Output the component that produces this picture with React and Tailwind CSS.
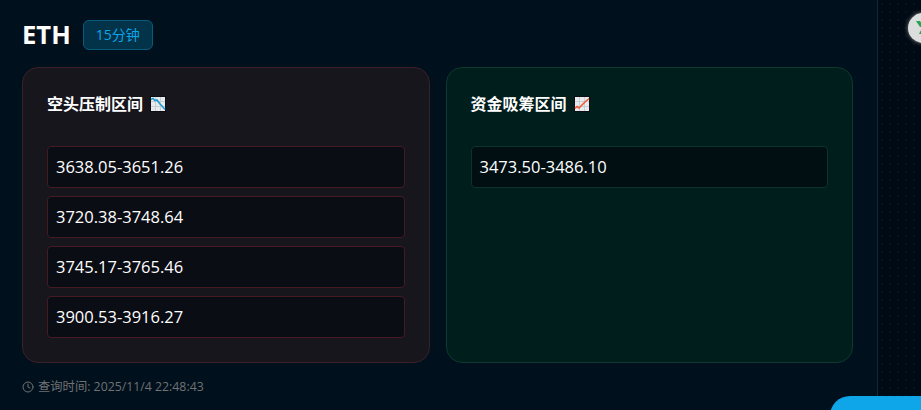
import React from 'react';
import { Clock } from 'lucide-react';

const fontStack = "font-['Open_Sans','Noto_Sans_CJK_SC',sans-serif]";

const shortZones = ['3638.05-3651.26', '3720.38-3748.64', '3745.17-3765.46', '3900.53-3916.27'];
const longZones = ['3473.50-3486.10'];

const ChartDown = () => (
  <svg width="16" height="16" viewBox="0 0 16 16" className="shrink-0">
    <rect x="0" y="0" width="16" height="16" fill="#0b0d12" />
    <rect x="1" y="1" width="14" height="14" fill="#e8ebee" />
    <path d="M5.5 1v14M10.5 1v14M1 5.5h14M1 10.5h14" stroke="#c9ced3" strokeWidth="1" />
    <path d="M1 3.5 L3 2.5 L5 4.5 L7 4 L10 8 L12 10 L15 13.5" fill="none" stroke="#1f9bd1" strokeWidth="1.6" />
  </svg>
);

const ChartUp = () => (
  <svg width="16" height="16" viewBox="0 0 16 16" className="shrink-0">
    <rect x="0" y="0" width="16" height="16" fill="#0b0d12" />
    <rect x="1" y="1" width="14" height="14" fill="#e8ebee" />
    <path d="M5.5 1v14M10.5 1v14M1 5.5h14M1 10.5h14" stroke="#c9ced3" strokeWidth="1" />
    <path d="M1 12.5 L3 10.5 L5 12 L8 9 L11 6 L15 2.5" fill="none" stroke="#ee5a3a" strokeWidth="1.6" />
  </svg>
);

const ZoneCard = ({ title, icon, zones, cardClass, rowClass }) => (
  <div className={`flex-1 h-[296px] rounded-2xl border px-6 pt-[25px] ${cardClass}`}>
    <div className="flex items-center gap-[7px] h-[22px] text-base font-bold text-white">
      <span>{title}</span>
      {icon}
    </div>
    <div className="mt-[31px] flex flex-col gap-2">
      {zones.map((zone) => (
        <div key={zone} className={`h-[42px] flex items-center rounded border px-2 text-[16.5px] text-white ${rowClass}`}>
          {zone}
        </div>
      ))}
    </div>
  </div>
);

export default function App() {
  return (
    <div className={`relative flex h-[410px] w-[921px] overflow-hidden bg-[#00101c] ${fontStack}`}>
      <main className="w-[878px] shrink-0 border-r border-[#112a38] pl-[22px] pr-[24px] pt-5">
        <div className="flex items-center gap-3 h-[30px]">
          <span className="text-[25.6px] font-bold text-white">ETH</span>
          <span className="flex h-[30px] w-[70px] items-center justify-center rounded-md border border-[#0a5a7c] bg-[#023349] text-sm text-[#0ea5e9]">
            15分钟
          </span>
        </div>
        <div className="mt-[17px] flex gap-4">
          <ZoneCard
            title="空头压制区间"
            icon={<ChartDown />}
            zones={shortZones}
            cardClass="border-[#3b1f29] bg-[#17161d]"
            rowClass="border-[#451a23] bg-[#0b0d14]"
          />
          <ZoneCard
            title="资金吸筹区间"
            icon={<ChartUp />}
            zones={longZones}
            cardClass="border-[#0c3a2c] bg-[#001e1c]"
            rowClass="border-[#0b3528] bg-[#010f13]"
          />
        </div>
        <div className="mt-[15px] flex items-center gap-1 text-[12.3px] text-[#707274]">
          <Clock size={12} />
          <span>查询时间: 2025/11/4 22:48:43</span>
        </div>
      </main>
      <aside className="flex-1 bg-[#000a14] bg-[radial-gradient(#07131f_1px,transparent_1px)] bg-[length:8px_8px]" />
      <div className="absolute left-[908px] top-[13px] flex h-[30px] w-[30px] items-center rounded-full bg-[#dcdedd] pl-[8px] shadow-[0_0_4px_rgba(255,255,255,0.5)]">
        <svg width="14" height="14" viewBox="0 0 14 14">
          <path d="M0 0h4l2 3v3h-2zM3 13l2-4h2v4z" fill="#22a552" />
        </svg>
      </div>
      <div className="absolute left-[830px] top-[396px] h-[40px] w-[120px] rounded-[20px] bg-[#0ea5e9]" />
    </div>
  );
}
